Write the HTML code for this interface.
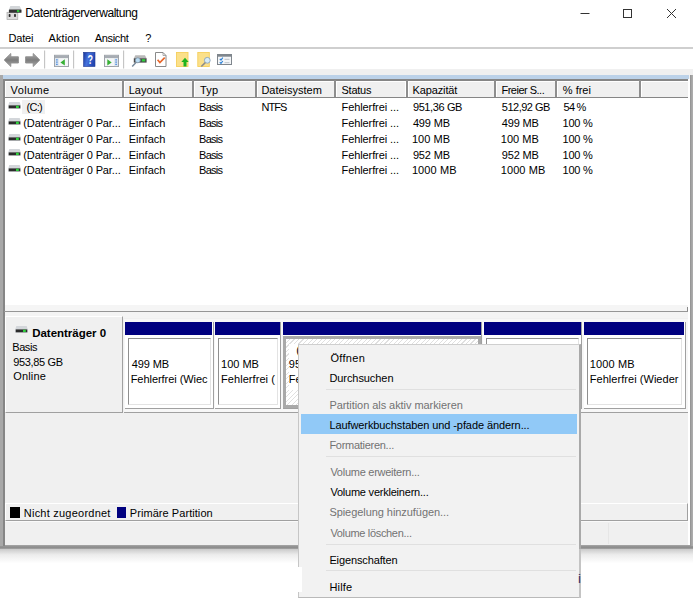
<!DOCTYPE html>
<html lang="de">
<head>
<meta charset="utf-8">
<title>Datenträgerverwaltung</title>
<style>
*{box-sizing:border-box;margin:0;padding:0}
html,body{width:693px;height:599px;overflow:hidden;background:#fff}
body{font-family:"Liberation Sans",sans-serif;font-size:11px;color:#000;position:relative}
.a{position:absolute}
.t{position:absolute;white-space:nowrap;line-height:14px;height:14px}
.ch{position:absolute;top:81px;height:16px;background:#f0f0f0;border-left:1px solid #fff;border-top:1px solid #fff}
.cs{position:absolute;top:80px;height:17px;width:2px;background:#8e8e8e}
.cell{position:absolute;top:322px;height:86.500px;background:#fff;border-right:1px solid #a0a0a0;border-bottom:1px solid #a0a0a0}
.cell b{position:absolute;left:0.500px;top:0.300px;right:0.700px;height:13.200px;background:#00007f}
.cell i{position:absolute;left:3px;top:16px;right:2.500px;bottom:2.500px;border:1px solid #8f8f8f;border-right-color:#e3e3e3;border-bottom-color:#e3e3e3}
.dis{color:#727272}
.sep{position:absolute;left:326px;width:250px;height:1px;background:#e0e0e0}
</style>
</head>
<body>

<div class="a" style="left:0;top:69px;width:693px;height:477px;background:#f0f0f0"></div>
<div class="a" style="left:0;top:544.700px;width:693px;height:4.200px;background:linear-gradient(#a8a8a8,#8a8a8a 55%,#a4a4a4)"></div>
<div class="a" style="left:0;top:548.900px;width:693px;height:16px;background:linear-gradient(#cacaca,#ececec 36%,#fff 90%)"></div>
<div class="t" id="ttl" style="left:25.3px;top:5.5px;font-size:12px;letter-spacing:-0.44px">Datenträgerverwaltung</div>
<svg class="a" style="left:0;top:0" width="24" height="24" viewBox="0 0 24 24">
<rect x="7" y="12.300" width="10.800" height="7.300" fill="#dcdcdc" stroke="#a6a6a6" stroke-width="0.700"/>
<rect x="8.700" y="14.100" width="1.800" height="2.800" rx="0.600" fill="#2d2d2d"/>
<rect x="14.100" y="14.100" width="1.800" height="2.800" rx="0.600" fill="#2d2d2d"/>
<path d="M10.300 6h9.400l1.800 3.700h-12.600z" fill="#d3d6d9"/>
<rect x="8.900" y="9.500" width="12.600" height="3.200" rx="0.500" fill="#333"/>
<rect x="16.900" y="10" width="2.400" height="2.100" fill="#2fc43b"/>
</svg>
<svg class="a" style="left:570px;top:0.300px" width="123" height="30" viewBox="0 0 123 30">
<path d="M10.500 13.500h9" stroke="#333" stroke-width="1" fill="none"/>
<rect x="53.500" y="9.500" width="8" height="8" stroke="#333" stroke-width="1" fill="none"/>
<path d="M97 9l9 9M106 9l-9 9" stroke="#333" stroke-width="1" fill="none"/>
</svg>
<div class="t" id="m1" style="left:8.4px;top:31px;letter-spacing:-0.15px">Datei</div>
<div class="t" id="m2" style="left:48.5px;top:31px;letter-spacing:0.10px">Aktion</div>
<div class="t" id="m3" style="left:94.7px;top:31px;letter-spacing:-0.32px">Ansicht</div>
<div class="t" id="m4" style="left:145.2px;top:31px;">?</div>
<div class="a" style="left:0;top:47px;width:693px;height:1.500px;background:#cfcfcf"></div>
<svg class="a" style="left:0;top:49px" width="240" height="20" viewBox="0 49 240 20">
<defs>
<linearGradient id="ga" x1="0" y1="0" x2="0" y2="1"><stop offset="0" stop-color="#adadad"/><stop offset="0.500" stop-color="#7c7c7c"/><stop offset="1" stop-color="#a9a9a9"/></linearGradient>
<linearGradient id="gh" x1="0" y1="0" x2="1" y2="0.300"><stop offset="0" stop-color="#17349a"/><stop offset="0.450" stop-color="#4573dd"/><stop offset="1" stop-color="#2447b3"/></linearGradient>
</defs>
<path d="M4.200 60l6.600-6.500v3.300h7.600v6.200h-7.600v3.500z" fill="url(#ga)" stroke="#8c8c8c" stroke-width="0.900" stroke-linejoin="round"/>
<path d="M39.800 60l-6.600-6.500v3.300h-7.600v6.200h7.600v3.500z" fill="url(#ga)" stroke="#8c8c8c" stroke-width="0.900" stroke-linejoin="round"/>
<path d="M44.600 50.500v18M73.600 50.500v18M123.600 50.500v18" stroke="#c3c3c3" stroke-width="1.100"/>
<rect x="54.500" y="55.300" width="14" height="11.200" fill="#f4f6f8" stroke="#9ea3a9"/>
<rect x="55" y="55.800" width="13" height="2.300" fill="#a7acb3"/>
<rect x="55" y="58.100" width="3.800" height="8" fill="#dbe4ee"/>
<path d="M56.900 59.300v1.300M56.900 61.500v1.300M56.900 63.700v1.300" stroke="#3c82dc" stroke-width="1.400"/>
<path d="M64.800 59.300v6.200l-4.400-3.100z" fill="#37b034"/>
<rect x="83.600" y="52.300" width="11.400" height="14.200" fill="url(#gh)" stroke="#1b3690" stroke-width="0.600"/>
<text x="90.200" y="64.300" font-family="Liberation Sans, sans-serif" font-size="12.500" font-weight="bold" fill="#fff" text-anchor="middle" textLength="5.500" lengthAdjust="spacingAndGlyphs">?</text>
<rect x="104.500" y="55.300" width="14" height="11.200" fill="#f4f6f8" stroke="#9ea3a9"/>
<rect x="105" y="55.800" width="13" height="2.300" fill="#a7acb3"/>
<rect x="114.200" y="58.100" width="3.800" height="8" fill="#dbe4ee"/>
<path d="M116.100 59.300v1.300M116.100 61.500v1.300M116.100 63.700v1.300" stroke="#3c82dc" stroke-width="1.400"/>
<path d="M107.300 59.300v6.200l4.400-3.100z" fill="#37b034"/>
<path d="M135.300 55.300h9.700l1.600 3.200h-12.800z" fill="#b9b9b9"/>
<rect x="133.800" y="58.300" width="12.800" height="4.300" fill="#474747"/>
<rect x="141.800" y="59.200" width="3.400" height="2.300" fill="#2ed13c"/>
<circle cx="137.800" cy="60.300" r="2.500" fill="#b9dcf3" stroke="#7f93a6" stroke-width="0.800"/>
<path d="M136 62.500l-3.800 4" stroke="#76889a" stroke-width="1.400"/>
<path d="M155.500 52.500h7.500l3 3v11h-10.500z" fill="#fff" stroke="#8a8a8a"/>
<path d="M163 52.500v3h3" fill="none" stroke="#8a8a8a" stroke-width="0.700"/>
<path d="M157.600 59.800l2.300 2.700l4.800-4.800" stroke="#e8662a" stroke-width="1.700" fill="none"/>
<rect x="176.500" y="52.500" width="11.500" height="14" fill="#fbe08a" stroke="#f5cf5c" stroke-width="0.900"/>
<path d="M185 57.800l3.700 4.200h-2.200v4.500h-3v-4.500h-2.200z" fill="#1fb31f"/>
<rect x="197.800" y="52.500" width="11.500" height="14" fill="#fbe08a" stroke="#f5cf5c" stroke-width="0.900"/>
<circle cx="207.300" cy="60.300" r="2.900" fill="#d7ecf8" stroke="#8aa3b8" stroke-width="0.900"/>
<path d="M205.300 62.600l-4 3.900" stroke="#8c8c8c" stroke-width="1.500"/>
<rect x="217.500" y="54.500" width="14" height="10" fill="#f4f6f8" stroke="#7f868d"/>
<rect x="218" y="55" width="13" height="1.700" fill="#7f868d"/>
<path d="M219.800 58.800l1.200 1.200l1.800-2.300M219.800 62.100l1.200 1.200l1.800-2.300" stroke="#2a7fd6" stroke-width="1.200" fill="none"/>
<path d="M224.500 59.300h5M224.500 62.600h5" stroke="#c6ccd2" stroke-width="1.200"/>
</svg>

<div class="a" style="left:0;top:75px;width:3.200px;height:471px;background:#a8a8a8"></div>
<div class="a" style="left:3.200px;top:79px;width:1.500px;height:467px;background:#868686"></div>
<div class="a" style="left:689.700px;top:75px;width:3.300px;height:471px;background:linear-gradient(90deg,#909090,#a4a4a4 50%,#b0b0b0)"></div>
<div class="a" style="left:688px;top:79px;width:2px;height:466px;background:#fff"></div>
<div class="a" style="left:2.800px;top:75px;width:686.700px;height:4px;background:#bcd2e9"></div>
<div class="a" style="left:4.700px;top:79px;width:685.300px;height:226.200px;background:#fff"></div>
<div class="a" style="left:4.700px;top:305.200px;width:683.300px;height:5.600px;background:#f5f5f5"></div>
<div class="a" style="left:4.700px;top:312px;width:683.300px;height:5.500px;background:#f4f4f4"></div>
<div class="a" style="left:3.200px;top:79px;width:684.700px;height:1.800px;background:#868686"></div>
<div class="a" style="left:4.700px;top:96.700px;width:683px;height:1.300px;background:#868686"></div>
<div class="ch" style="left:4.7px;width:117.3px"></div>
<div class="cs" style="left:122px"></div>
<div class="ch" style="left:124px;width:68px"></div>
<div class="cs" style="left:192px"></div>
<div class="ch" style="left:194px;width:61px"></div>
<div class="cs" style="left:255px"></div>
<div class="ch" style="left:257px;width:77.30000000000001px"></div>
<div class="cs" style="left:334.3px"></div>
<div class="ch" style="left:336.3px;width:69.19999999999999px"></div>
<div class="cs" style="left:405.5px"></div>
<div class="ch" style="left:407.5px;width:86.5px"></div>
<div class="cs" style="left:494px"></div>
<div class="ch" style="left:496px;width:58.799999999999955px"></div>
<div class="cs" style="left:554.8px"></div>
<div class="ch" style="left:556.8px;width:82.5px"></div>
<div class="cs" style="left:639.3px"></div>
<div class="ch" style="left:641.3px;width:46.700000000000045px"></div>
<div class="t" id="h1" style="left:10.5px;top:83.4px;letter-spacing:0.40px">Volume</div>
<div class="t" id="h2" style="left:128.7px;top:83.4px;letter-spacing:0.06px">Layout</div>
<div class="t" id="h3" style="left:200.0px;top:83.4px;letter-spacing:0.20px">Typ</div>
<div class="t" id="h4" style="left:261.4px;top:83.4px;letter-spacing:-0.01px">Dateisystem</div>
<div class="t" id="h5" style="left:341.5px;top:83.4px;letter-spacing:-0.24px">Status</div>
<div class="t" id="h6" style="left:412.5px;top:83.4px;letter-spacing:-0.12px">Kapazität</div>
<div class="t" id="h7" style="left:501.5px;top:83.4px;letter-spacing:-0.51px">Freier S...</div>
<div class="t" id="h8" style="left:562.8px;top:83.4px;">% frei</div>
<div class="a" style="left:21.600px;top:100px;width:23.800px;height:13.500px;background:#f0f0f0"></div>
<svg class="a" style="left:7.800px;top:102.2px" width="13" height="7" viewBox="0 0 13 7"><path d="M1.300 0h10.400l1 3.300h-12.400z" fill="#d3d6da"/><rect x="0.300" y="3.100" width="12.400" height="3.700" fill="#d3d6da"/><rect x="0.700" y="3.400" width="11.600" height="2.900" fill="#2c2c2c"/><rect x="8" y="3.700" width="2.800" height="2.300" fill="#2fd03c"/></svg>
<div class="t" id="r0a" style="left:26.5px;top:100.3px;letter-spacing:-0.70px">(C:)</div>
<div class="t" id="r0b" style="left:128.7px;top:100.3px;">Einfach</div>
<div class="t" id="r0c" style="left:199.0px;top:100.3px;letter-spacing:-0.70px">Basis</div>
<div class="t" id="r0d" style="left:261.4px;top:100.3px;letter-spacing:-0.90px">NTFS</div>
<div class="t" id="r0e" style="left:341.5px;top:100.3px;letter-spacing:-0.09px">Fehlerfrei ...</div>
<div class="t" id="r0f" style="left:412.9px;top:100.3px;letter-spacing:-0.38px">951,36 GB</div>
<div class="t" id="r0g" style="left:501.8px;top:100.3px;letter-spacing:-0.50px">512,92 GB</div>
<div class="t" id="r0h" style="left:563.5px;top:100.3px;letter-spacing:-0.73px">54 %</div>
<svg class="a" style="left:7.800px;top:117.9px" width="13" height="7" viewBox="0 0 13 7"><path d="M1.300 0h10.400l1 3.300h-12.400z" fill="#d3d6da"/><rect x="0.300" y="3.100" width="12.400" height="3.700" fill="#d3d6da"/><rect x="0.700" y="3.400" width="11.600" height="2.900" fill="#2c2c2c"/><rect x="8" y="3.700" width="2.800" height="2.300" fill="#2fd03c"/></svg>
<div class="t" id="r1a" style="left:23.3px;top:116px;letter-spacing:-0.11px">(Datenträger 0 Par...</div>
<div class="t" id="r1b" style="left:128.7px;top:116px;">Einfach</div>
<div class="t" id="r1c" style="left:199.0px;top:116px;letter-spacing:-0.70px">Basis</div>
<div class="t" id="r1e" style="left:341.5px;top:116px;letter-spacing:-0.09px">Fehlerfrei ...</div>
<div class="t" id="r1f" style="left:412.9px;top:116px;letter-spacing:-0.14px">499 MB</div>
<div class="t" id="r1g" style="left:501.8px;top:116px;letter-spacing:-0.18px">499 MB</div>
<div class="t" id="r1h" style="left:562.5px;top:116px;letter-spacing:-0.20px">100 %</div>
<svg class="a" style="left:7.800px;top:133.6px" width="13" height="7" viewBox="0 0 13 7"><path d="M1.300 0h10.400l1 3.300h-12.400z" fill="#d3d6da"/><rect x="0.300" y="3.100" width="12.400" height="3.700" fill="#d3d6da"/><rect x="0.700" y="3.400" width="11.600" height="2.900" fill="#2c2c2c"/><rect x="8" y="3.700" width="2.800" height="2.300" fill="#2fd03c"/></svg>
<div class="t" id="r2a" style="left:23.3px;top:131.7px;letter-spacing:-0.11px">(Datenträger 0 Par...</div>
<div class="t" id="r2b" style="left:128.7px;top:131.7px;">Einfach</div>
<div class="t" id="r2c" style="left:199.0px;top:131.7px;letter-spacing:-0.70px">Basis</div>
<div class="t" id="r2e" style="left:341.5px;top:131.7px;letter-spacing:-0.09px">Fehlerfrei ...</div>
<div class="t" id="r2f" style="left:411.9px;top:131.7px;letter-spacing:0.06px">100 MB</div>
<div class="t" id="r2g" style="left:500.8px;top:131.7px;letter-spacing:0.02px">100 MB</div>
<div class="t" id="r2h" style="left:562.5px;top:131.7px;letter-spacing:-0.20px">100 %</div>
<svg class="a" style="left:7.800px;top:149.4px" width="13" height="7" viewBox="0 0 13 7"><path d="M1.300 0h10.400l1 3.300h-12.400z" fill="#d3d6da"/><rect x="0.300" y="3.100" width="12.400" height="3.700" fill="#d3d6da"/><rect x="0.700" y="3.400" width="11.600" height="2.900" fill="#2c2c2c"/><rect x="8" y="3.700" width="2.800" height="2.300" fill="#2fd03c"/></svg>
<div class="t" id="r3a" style="left:23.3px;top:147.5px;letter-spacing:-0.11px">(Datenträger 0 Par...</div>
<div class="t" id="r3b" style="left:128.7px;top:147.5px;">Einfach</div>
<div class="t" id="r3c" style="left:199.0px;top:147.5px;letter-spacing:-0.70px">Basis</div>
<div class="t" id="r3e" style="left:341.5px;top:147.5px;letter-spacing:-0.09px">Fehlerfrei ...</div>
<div class="t" id="r3f" style="left:412.9px;top:147.5px;letter-spacing:-0.14px">952 MB</div>
<div class="t" id="r3g" style="left:501.8px;top:147.5px;letter-spacing:-0.18px">952 MB</div>
<div class="t" id="r3h" style="left:562.5px;top:147.5px;letter-spacing:-0.20px">100 %</div>
<svg class="a" style="left:7.800px;top:165.0px" width="13" height="7" viewBox="0 0 13 7"><path d="M1.300 0h10.400l1 3.300h-12.400z" fill="#d3d6da"/><rect x="0.300" y="3.100" width="12.400" height="3.700" fill="#d3d6da"/><rect x="0.700" y="3.400" width="11.600" height="2.900" fill="#2c2c2c"/><rect x="8" y="3.700" width="2.800" height="2.300" fill="#2fd03c"/></svg>
<div class="t" id="r4a" style="left:23.3px;top:163.1px;letter-spacing:-0.11px">(Datenträger 0 Par...</div>
<div class="t" id="r4b" style="left:128.7px;top:163.1px;">Einfach</div>
<div class="t" id="r4c" style="left:199.0px;top:163.1px;letter-spacing:-0.70px">Basis</div>
<div class="t" id="r4e" style="left:341.5px;top:163.1px;letter-spacing:-0.09px">Fehlerfrei ...</div>
<div class="t" id="r4f" style="left:411.9px;top:163.1px;letter-spacing:0.10px">1000 MB</div>
<div class="t" id="r4g" style="left:500.8px;top:163.1px;letter-spacing:0.07px">1000 MB</div>
<div class="t" id="r4h" style="left:562.5px;top:163.1px;letter-spacing:-0.20px">100 %</div>
<div class="a" style="left:4px;top:310.700px;width:683.700px;height:1.200px;background:#969696"></div>
<div class="a" style="left:686.500px;top:306.700px;width:1.200px;height:4px;background:#8a8a8a"></div>
<div class="a" style="left:5px;top:316px;width:118px;height:97px;background:#f0f0f0;border-top:1px solid #fff;border-left:1px solid #fff;border-right:1px solid #a0a0a0;border-bottom:1px solid #a0a0a0"></div>
<svg class="a" style="left:15px;top:325.500px" width="13" height="7" viewBox="0 0 13 7"><path d="M1.300 0h10.400l1 3.300h-12.400z" fill="#d3d6da"/><rect x="0.300" y="3.100" width="12.400" height="3.700" fill="#d3d6da"/><rect x="0.700" y="3.400" width="11.600" height="2.900" fill="#2c2c2c"/><rect x="8" y="3.700" width="2.800" height="2.300" fill="#2fd03c"/></svg>
<div class="t" id="d1" style="left:32.2px;top:325.8px;font-weight:bold;font-size:11.500px;letter-spacing:-0.02px">Datenträger 0</div>
<div class="t" id="d2" style="left:12.3px;top:340px;letter-spacing:-0.45px">Basis</div>
<div class="t" id="d3" style="left:13.3px;top:354.7px;letter-spacing:-0.35px">953,85 GB</div>
<div class="t" id="d4" style="left:13.3px;top:369.4px;letter-spacing:0.14px">Online</div>
<div class="a" style="left:123.500px;top:319px;width:564px;height:93.500px;background:#f7f7f7;border-bottom:1px solid #a0a0a0"></div>
<div class="cell" style="left:124.5px;width:89.5px"><b></b><i></i></div>
<div class="t" id="p0a" style="left:131.7px;top:357.2px;letter-spacing:-0.10px">499 MB</div>
<div class="t" id="p0b" style="left:130.7px;top:371.7px;letter-spacing:-0.05px">Fehlerfrei (Wiec</div>
<div class="cell" style="left:214.9px;width:66.3px"><b></b><i></i></div>
<div class="t" id="p1a" style="left:221.1px;top:357.2px;letter-spacing:-0.02px">100 MB</div>
<div class="t" id="p1b" style="left:221.1px;top:371.7px;letter-spacing:0.05px">Fehlerfrei (</div>
<div class="cell" style="left:282.5px;width:199.8px"><b></b><i></i></div>
<div class="a" style="left:282.5px;top:336px;width:198.8px;height:71.500px;border:3px solid #a9a9a9;background:repeating-linear-gradient(135deg,#fff 0,#fff 2.400px,#e0e0e0 2.400px,#e0e0e0 3.200px)"></div>
<div class="cell" style="left:483.4px;width:99.1px"><b></b><i></i></div>
<div class="cell" style="left:583.5px;width:102.2px"><b></b><i></i></div>
<div class="t" id="p4a" style="left:589.8px;top:357.2px;letter-spacing:0.13px">1000 MB</div>
<div class="t" id="p4b" style="left:589.8px;top:371.7px;letter-spacing:0.04px">Fehlerfrei (Wieder</div>
<div class="a" style="left:288.500px;top:344px;width:12px;height:46px;background:#fff"></div>
<div class="t" style="left:288.800px;top:357.200px">95</div>
<div class="t" style="left:288.800px;top:371.700px">Fe</div>
<div class="t" style="left:296.300px;top:342.500px">(</div>
<div class="a" style="left:5px;top:503px;width:683px;height:18px;border-top:1px solid #fff;border-left:1px solid #fff;border-bottom:1px solid #a0a0a0;border-right:1px solid #a0a0a0"></div>
<div class="a" style="left:10.200px;top:507px;width:9.500px;height:11px;background:#000"></div>
<div class="t" id="l1" style="left:23.8px;top:506px;letter-spacing:0.23px">Nicht zugeordnet</div>
<div class="a" style="left:116.500px;top:507px;width:9.500px;height:11px;background:#00007f"></div>
<div class="t" id="l2" style="left:129.8px;top:506px;letter-spacing:0.06px">Primäre Partition</div>
<div class="a" style="left:608px;top:523px;width:1px;height:21px;background:#e6e6e6"></div>
<div class="a" style="left:4.700px;top:521.300px;width:683px;height:1px;background:#fafafa"></div>
<div class="a" style="left:298px;top:344px;width:283px;height:254px;background:#f2f2f2;border-left:1px solid #c6c6c6;border-top:1px solid #cfcfcf;border-right:2px solid #a9a9a9;border-bottom:1px solid #b9b9b9"></div>
<div class="a" style="left:298px;top:566.500px;width:3.700px;height:25.700px;background:#fff"></div>
<div class="a" style="left:579px;top:549px;width:2px;height:49px;background:#c4c4c4"></div>
<div class="t" style="left:578.100px;top:571px;font-size:13.500px;line-height:16px;height:16px;color:#3d2b5e">i</div>
<div class="a" style="left:300.500px;top:414px;width:276px;height:20px;background:#91c9f7"></div>
<div class="t" id="c0" style="left:330.4px;top:350.7px;letter-spacing:0.32px">Öffnen</div>
<div class="t" id="c1" style="left:329.4px;top:371px;letter-spacing:-0.07px">Durchsuchen</div>
<div class="t dis" id="c2" style="left:329.4px;top:397.7px;letter-spacing:-0.06px">Partition als aktiv markieren</div>
<div class="t" id="c3" style="left:329.4px;top:417.9px;letter-spacing:-0.09px">Laufwerkbuchstaben und -pfade ändern...</div>
<div class="t dis" id="c4" style="left:329.4px;top:438.1px;letter-spacing:-0.28px">Formatieren...</div>
<div class="t dis" id="c5" style="left:330.4px;top:464.6px;letter-spacing:-0.26px">Volume erweitern...</div>
<div class="t" id="c6" style="left:330.4px;top:484.7px;letter-spacing:-0.22px">Volume verkleinern...</div>
<div class="t dis" id="c7" style="left:329.4px;top:504.9px;letter-spacing:-0.06px">Spiegelung hinzufügen...</div>
<div class="t dis" id="c8" style="left:330.4px;top:526.2px;letter-spacing:-0.33px">Volume löschen...</div>
<div class="t" id="c9" style="left:329.4px;top:553.2px;letter-spacing:-0.12px">Eigenschaften</div>
<div class="t" id="c10" style="left:329.4px;top:580px;letter-spacing:0.20px">Hilfe</div>
<div class="sep" style="top:389px"></div>
<div class="sep" style="top:456px"></div>
<div class="sep" style="top:544px"></div>
<div class="sep" style="top:569.7px"></div>
</body>
</html>
